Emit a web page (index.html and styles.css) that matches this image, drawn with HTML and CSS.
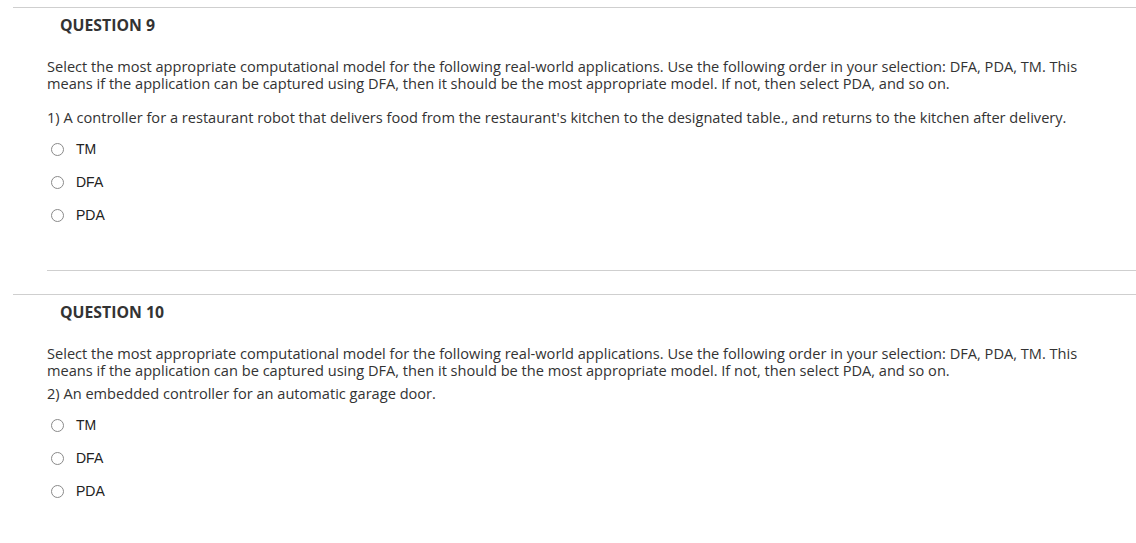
FILE: index.html
```html
<!DOCTYPE html>
<html>
<head>
<meta charset="utf-8">
<link rel="stylesheet" href="styles.css">
</head>
<body>
<div class="question">
  <h2 class="qtitle">QUESTION 9</h2>
  <div class="qbody">
    <p class="prompt">Select the most appropriate computational model for the following real-world applications. Use the following order in your selection: DFA, PDA, TM. This means if the application can be captured using DFA, then it should be the most appropriate model. If not, then select PDA, and so on.</p>
    <p class="item q9item">1) A controller for a restaurant robot that delivers food from the restaurant's kitchen to the designated table., and returns to the kitchen after delivery.</p>
    <ul class="choices">
      <li class="choice"><span class="radio"></span><span class="label">TM</span></li>
      <li class="choice"><span class="radio"></span><span class="label">DFA</span></li>
      <li class="choice"><span class="radio"></span><span class="label">PDA</span></li>
    </ul>
    <div class="endrule"></div>
  </div>
</div>
<div class="question">
  <h2 class="qtitle">QUESTION 10</h2>
  <div class="qbody">
    <p class="prompt">Select the most appropriate computational model for the following real-world applications. Use the following order in your selection: DFA, PDA, TM. This means if the application can be captured using DFA, then it should be the most appropriate model. If not, then select PDA, and so on.</p>
    <p class="item q10item">2) An embedded controller for an automatic garage door.</p>
    <ul class="choices">
      <li class="choice"><span class="radio"></span><span class="label">TM</span></li>
      <li class="choice"><span class="radio"></span><span class="label">DFA</span></li>
      <li class="choice"><span class="radio"></span><span class="label">PDA</span></li>
    </ul>
  </div>
</div>
</body>
</html>
```
FILE: styles.css
```css
html, body {
  margin: 0;
  padding: 0;
  background: #fff;
}
body {
  padding: 7px 0 0 13px;
  font-family: "Open Sans", "Liberation Sans", sans-serif;
  color: #333;
}
.question {
  border-top: 1px solid #cfcfcf;
}
.qtitle {
  margin: 0;
  padding: 7px 0 0 47px;
  font-size: 15.8px;
  line-height: 20px;
  font-weight: 700;
  color: #333;
}
.qbody {
  padding: 0 0 0 34px;
}
.prompt {
  margin: 23px 0 0 0;
  font-size: 14.6px;
  line-height: 17px;
  padding-right: 40px;
  color: #333;
}
.item {
  margin: 0;
  font-size: 14.6px;
  line-height: 17px;
}
.q9item { margin-top: 17px; }
.q10item { margin-top: 6px; }
.choices {
  list-style: none;
  margin: 14px 0 0 0;
  padding: 0 0 0 4px;
  display: flex;
  flex-direction: column;
  gap: 15px;
}
.choice {
  display: flex;
  align-items: center;
  height: 18px;
}
.radio {
  border: 1px solid #8a8a8a;
  border-radius: 50%;
  box-sizing: border-box;
  width: 13px;
  height: 13px;
}
.label {
  margin-left: 12px;
  font-family: "Liberation Sans", Arial, sans-serif;
  font-size: 14px;
  color: #222;
}
.endrule {
  margin-top: 46px;
  border-top: 1px solid #cfcfcf;
  margin-bottom: 23px;
}
```
